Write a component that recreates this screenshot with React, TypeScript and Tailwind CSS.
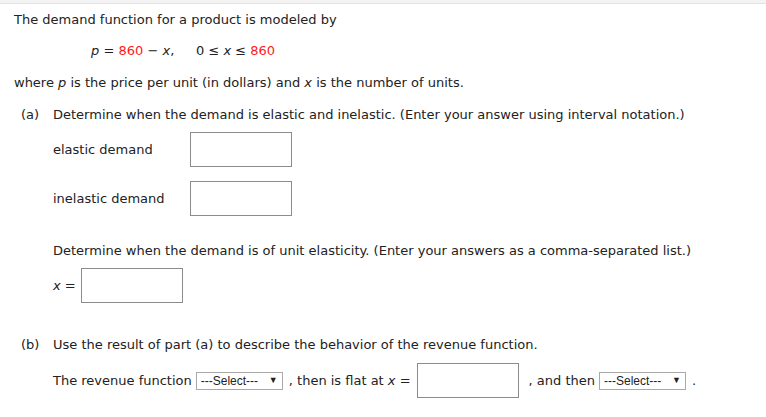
import React from "react";

const AnswerBox: React.FC = () => (
  <input
    type="text"
    className="w-[102px] h-[35px] border border-[#8c8c8c] bg-white outline-none"
  />
);

const SelectBox: React.FC = () => (
  <span className="inline-flex items-center justify-between w-[87px] h-[18px] border border-[#a9a9a9] bg-white px-[4px] text-[12px] text-[#222] font-['Liberation_Sans',Arial,sans-serif]">
    <span>---Select---</span>
    <span className="text-[9px] leading-none">▼</span>
  </span>
);

const Var: React.FC<{ children: React.ReactNode }> = ({ children }) => (
  <i className="italic">{children}</i>
);

export default function App() {
  return (
    <div className="w-[766px] h-[417px] bg-white text-[#222] text-[13px] leading-5 font-['DejaVu_Sans',Verdana,sans-serif] overflow-hidden">
      <div className="h-[4px] bg-[#f3f3f3] border-b border-[#e2e2e2]" />
      <div className="pl-[14px]">
        <p className="mt-[6px]">The demand function for a product is modeled by</p>

        <p className="mt-[11px] pl-[77px] flex">
          <span className="w-[105px]">
            <Var>p</Var> = <span className="text-[#ff1a1a]">860</span> − <Var>x</Var>,
          </span>
          <span>
            0 ≤ <Var>x</Var> ≤ <span className="text-[#ff1a1a]">860</span>
          </span>
        </p>

        <p className="mt-[12px]">
          where <Var>p</Var> is the price per unit (in dollars) and <Var>x</Var> is the number of units.
        </p>

        <div className="mt-[12px] flex">
          <span className="w-[39px] pl-[7px]">(a)</span>
          <div>
            <p>Determine when the demand is elastic and inelastic. (Enter your answer using interval notation.)</p>
            <div className="mt-[7px] flex items-center">
              <span className="w-[137px]">elastic demand</span>
              <AnswerBox />
            </div>
            <div className="mt-[14px] flex items-center">
              <span className="w-[137px]">inelastic demand</span>
              <AnswerBox />
            </div>
            <p className="mt-[25px]">
              Determine when the demand is of unit elasticity. (Enter your answers as a comma-separated list.)
            </p>
            <div className="mt-[7px] flex items-center">
              <span className="w-[28px]">
                <Var>x</Var> =
              </span>
              <AnswerBox />
            </div>
          </div>
        </div>

        <div className="mt-[32px] flex">
          <span className="w-[39px] pl-[7px]">(b)</span>
          <div>
            <p>Use the result of part (a) to describe the behavior of the revenue function.</p>
            <div className="mt-[8px] flex items-center gap-[4px]">
              <span>The revenue function</span>
              <SelectBox />
              <span className="ml-[2px]">
                , then is flat at <Var>x</Var> =
              </span>
              <span className="ml-[2px]">
                <AnswerBox />
              </span>
              <span className="ml-[6px]">, and then</span>
              <SelectBox />
              <span className="ml-[2px]">.</span>
            </div>
          </div>
        </div>
      </div>
    </div>
  );
}
